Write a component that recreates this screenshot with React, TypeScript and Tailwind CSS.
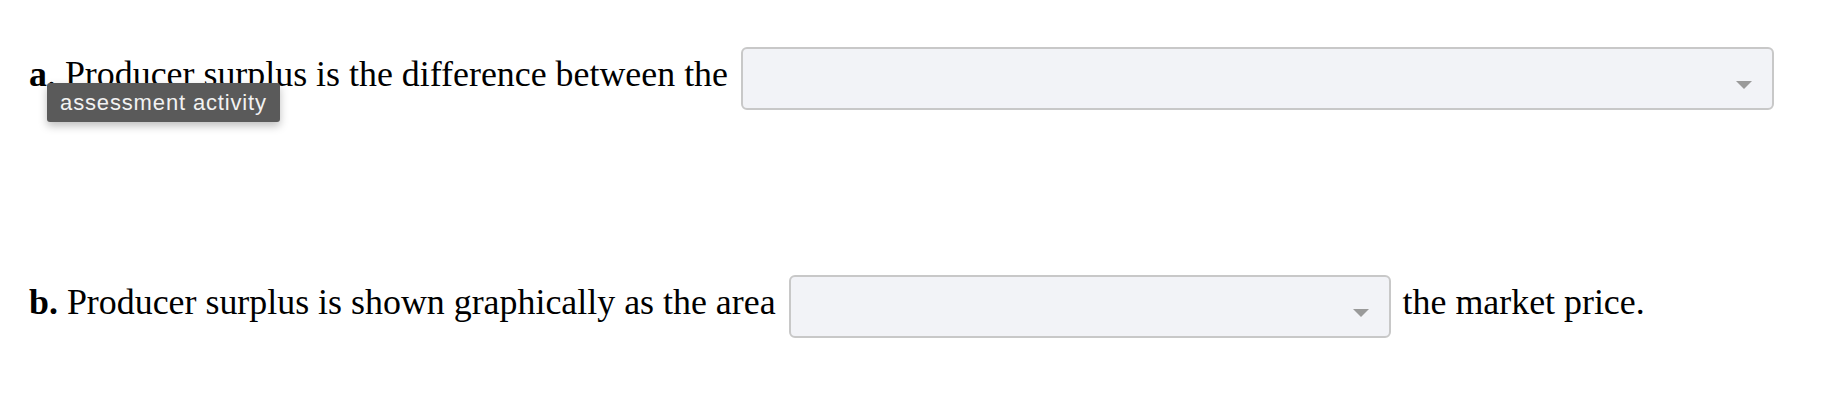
import React from "react";

function Select({ width }: { width: string }) {
  return (
    <div
      className={`relative shrink-0 h-[63px] ${width} rounded-[6px] border-2 border-[#c8c8c8] bg-[#f2f3f7]`}
    >
      <svg
        className="absolute right-[20px] top-[32px]"
        width="16"
        height="8"
        viewBox="0 0 16 8"
      >
        <polygon points="0,0 16,0 8,8" fill="#9a9a9a" />
      </svg>
    </div>
  );
}

export default function App() {
  return (
    <div className="relative w-[1832px] h-[400px] bg-white text-black font-['Liberation_Serif','Times_New_Roman',serif]">
      <div className="flex flex-col pt-[47px] pl-[29px] gap-[165px]">
        <div className="flex items-center">
          <span className="text-[35.9px] leading-[40px] whitespace-nowrap mb-[10px]">
            <b>a</b>. Producer surplus is the difference between the
          </span>
          <div className="ml-[13px]">
            <Select width="w-[1033px]" />
          </div>
        </div>
        <div className="flex items-center">
          <span className="text-[35.9px] leading-[40px] whitespace-nowrap mb-[10px]">
            <b>b.</b> Producer surplus is shown graphically as the area
          </span>
          <div className="ml-[13px]">
            <Select width="w-[602px]" />
          </div>
          <span className="ml-[12px] text-[35.9px] leading-[40px] whitespace-nowrap mb-[10px]">
            the market price.
          </span>
        </div>
      </div>
      <div className="absolute left-[47px] top-[83px] w-[233px] h-[39px] flex items-center justify-center rounded-[3px] bg-[#5a5a5a] text-[#f2f2f2] text-[22px] font-['Liberation_Sans',Arial,sans-serif] tracking-[0.85px] shadow-[0_4px_8px_rgba(0,0,0,0.25)]">
        assessment activity
      </div>
    </div>
  );
}
